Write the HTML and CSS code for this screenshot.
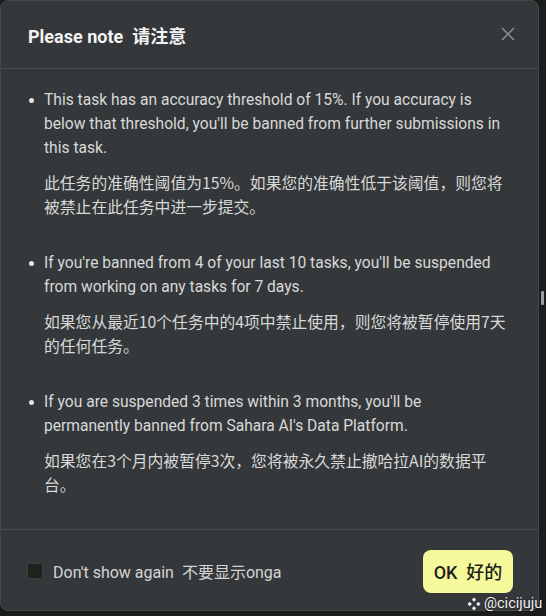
FILE: index.html
```html
<!DOCTYPE html>
<html lang="en">
<head>
<meta charset="utf-8">
<title>Please note</title>
<link rel="stylesheet" href="styles.css">
</head>
<body>
<div class="modal">
  <div class="modal-header">
    <h2 class="modal-title">Please note&nbsp; 请注意</h2>
    <button class="close-btn" aria-label="Close">
      <svg width="14" height="14" viewBox="0 0 14 14"><path d="M1 1 L13 13 M13 1 L1 13" stroke="#8e9194" stroke-width="1.5" fill="none"/></svg>
    </button>
  </div>
  <div class="modal-body">
    <ul class="rules">
      <li>
        <p class="en">This task has an accuracy threshold of 15%. If you accuracy is below that threshold, you'll be banned from further submissions in this task.</p>
        <p class="zh">此任务的准确性阈值为15%。如果您的准确性低于该阈值，则您将<br>被禁止在此任务中进一步提交。</p>
      </li>
      <li>
        <p class="en">If you're banned from 4 of your last 10 tasks, you'll be suspended from working on any tasks for 7 days.</p>
        <p class="zh">如果您从最近10个任务中的4项中禁止使用，则您将被暂停使用7天<br>的任何任务。</p>
      </li>
      <li>
        <p class="en">If you are suspended 3 times within 3 months, you'll be permanently banned from Sahara AI's Data Platform.</p>
        <p class="zh">如果您在3个月内被暂停3次，您将被永久禁止撤哈拉AI的数据平<br>台。</p>
      </li>
    </ul>
  </div>
  <div class="modal-footer">
    <label class="check">
      <span class="box"></span>
      <span class="check-label">Don't show again&nbsp; 不要显示onga</span>
    </label>
    <button class="ok-btn">OK&nbsp; 好的</button>
  </div>
</div>
<div class="edge-mark"></div>
<div class="watermark">
  <svg width="14" height="14" viewBox="0 0 13 13"><g fill="#f2f2f2"><path d="M6.5 0.5 L8.5 2.5 L6.5 4.5 L4.5 2.5Z"/><path d="M6.5 8.5 L8.5 10.5 L6.5 12.5 L4.5 10.5Z"/><path d="M2.5 4.5 L4.5 6.5 L2.5 8.5 L0.5 6.5Z"/><path d="M10.5 4.5 L12.5 6.5 L10.5 8.5 L8.5 6.5Z"/></g></svg>
  <span>@cicijuju</span>
</div>
</body>
</html>
```

FILE: styles.css
```css
html, body {
  margin: 0;
  padding: 0;
}
body {
  width: 546px;
  height: 616px;
  background: #1b1d1d;
  font-family: Roboto, "Noto Sans CJK SC", sans-serif;
  position: relative;
  overflow: hidden;
}
.modal {
  width: 539px;
  height: 611px;
  box-sizing: border-box;
  background: #35383a;
  border: 1px solid #45484a;
  border-radius: 8px;
  display: flex;
  flex-direction: column;
}
.modal-header {
  display: flex;
  align-items: flex-start;
  justify-content: space-between;
  padding: 25px 23px 0 27px;
  height: 69px;
  box-sizing: border-box;
  border-bottom: 1px solid #4a4d50;
}
.modal-title {
  margin: 0;
  font-size: 18px;
  line-height: 22px;
  font-weight: 700;
  color: #f3f3f3;
  font-family: Roboto, "Noto Sans CJK SC", sans-serif;
}
.close-btn {
  background: none;
  border: 0;
  padding: 0;
  margin-top: 1px;
  width: 14px;
  height: 14px;
  display: block;
}
.close-btn svg { display: block; }
.modal-body {
  flex: 1;
  padding: 19px 28px 0 27px;
}
.rules {
  margin: 0;
  padding: 0;
  list-style: none;
}
.rules li {
  position: relative;
  padding-left: 16px;
  margin-bottom: 32px;
}
.rules li::before {
  content: "";
  position: absolute;
  left: 1px;
  top: 10px;
  width: 5px;
  height: 5px;
  border-radius: 50%;
  background: #e6e6e6;
}
.rules p {
  margin: 0;
  font-size: 15.6px;
  line-height: 24px;
  color: #d8d9d9;
}
.rules p.en {
  margin-bottom: 11px;
}
.rules p.zh {
  font-family: "Noto Sans CJK SC", sans-serif;
  font-size: 15.8px;
  margin-right: -12px;
}
.modal-footer {
  height: 84px;
  box-sizing: border-box;
  border-top: 1px solid #4a4d50;
  display: flex;
  align-items: center;
  justify-content: space-between;
  padding: 3px 25px 0 26px;
}
.check {
  display: flex;
  align-items: center;
  gap: 10px;
}
.box {
  width: 16px;
  height: 16px;
  box-sizing: border-box;
  background: #20221d;
  border: 1px solid #3e403b;
  border-radius: 3px;
}
.check-label {
  font-size: 16px;
  color: #d4d5d5;
}
.ok-btn {
  width: 90px;
  height: 43px;
  border: 0;
  border-radius: 8px;
  background: #f5f99b;
  color: #1e1f1c;
  font-family: Roboto, "Noto Sans CJK SC", sans-serif;
  font-size: 18px;
  font-weight: 500;
  padding: 0;
}
.edge-mark {
  position: absolute;
  left: 541px;
  top: 291px;
  width: 3px;
  height: 14px;
  background: #9a9c9c;
  border-radius: 1px;
}
.watermark {
  position: absolute;
  left: 467px;
  top: 595px;
  display: flex;
  align-items: center;
  gap: 3px;
  color: #f2f2f2;
  font-family: Roboto, sans-serif;
  font-size: 14.5px;
  line-height: 17px;
  text-shadow: 0 0 2px rgba(0,0,0,0.6);
}
.watermark svg { display: block; }
```
